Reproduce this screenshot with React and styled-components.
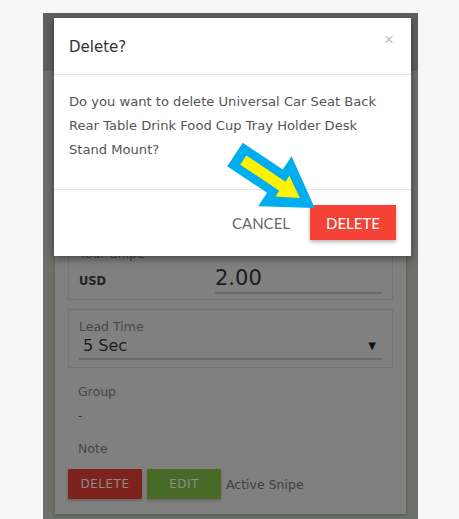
import React from 'react';
import styled, { createGlobalStyle } from 'styled-components';

const GlobalStyle = createGlobalStyle`
  html, body {
    margin: 0;
    padding: 0;
    background: #f7f7f7;
    font-family: "DejaVu Sans", sans-serif;
  }
`;

const Page = styled.div`
  position: relative;
  width: 459px;
  height: 519px;
  overflow: hidden;
  padding: 13px 0 0 43px;
  box-sizing: border-box;
`;

const Frame = styled.div`
  width: 375px;
  height: 520px;
  background: #6d6f6b;
  display: flex;
  flex-direction: column;
`;

const TopBar = styled.div`
  height: 58px;
  background: #5f605e;
  flex-shrink: 0;
`;

const Card = styled.div`
  margin: 0 12px;
  background: #808080;
  height: 443px;
  padding: 0 13px;
  box-sizing: border-box;
  box-shadow: 0 1px 3px rgba(0, 0, 0, 0.25);
  display: flex;
  flex-direction: column;
`;

const Hidden = styled.div`
  height: 166px;
  flex-shrink: 0;
`;

const Box = styled.div`
  border: 1px solid #747474;
  padding: ${p => p.$pad};
  margin-bottom: ${p => p.$gap || 0}px;
  display: flex;
  flex-direction: column;
`;

const Label = styled.div`
  font-size: 12.5px;
  color: #474747;
  line-height: 16px;
`;

const SnipeRow = styled.div`
  display: flex;
  align-items: flex-end;
  justify-content: space-between;
  margin-top: 4px;
`;

const Currency = styled.div`
  font-size: 11.5px;
  font-weight: bold;
  color: #232323;
  padding-bottom: 6px;
`;

const Amount = styled.div`
  width: 167px;
  font-size: 21px;
  color: #1c1c1c;
  border-bottom: 2px solid #6a6a6a;
  padding-bottom: 2px;
  line-height: 24px;
`;

const Select = styled.div`
  display: flex;
  justify-content: space-between;
  align-items: center;
  border-bottom: 2px solid #6a6a6a;
  font-size: 16px;
  color: #1c1c1c;
  padding: 0 6px 3px 4px;
  margin-top: 1px;
`;

const Caret = styled.span`
  font-size: 10px;
  color: #111;
`;

const Info = styled.div`
  padding: 0 10px;
  display: flex;
  flex-direction: column;
`;

const InfoLabel = styled(Label)`
  margin-top: ${p => p.$top || 0}px;
`;

const InfoValue = styled.div`
  font-size: 12.5px;
  color: #333;
  margin-top: 8px;
`;

const Actions = styled.div`
  display: flex;
  align-items: center;
  gap: 5px;
  margin-top: 12px;
`;

const DimButton = styled.div`
  width: 74px;
  height: 30px;
  display: flex;
  align-items: center;
  justify-content: center;
  background: ${p => p.$bg};
  color: #8c8c8c;
  font-size: 12px;
  letter-spacing: 0.5px;
  box-shadow: 0 2px 3px rgba(0, 0, 0, 0.2);
`;

const Status = styled.span`
  font-size: 12.5px;
  color: #3e3e3e;
`;

const Modal = styled.div`
  position: absolute;
  left: 54px;
  top: 18px;
  width: 357px;
  background: #fff;
  box-shadow: 0 3px 8px rgba(0, 0, 0, 0.45);
  display: flex;
  flex-direction: column;
`;

const ModalHeader = styled.div`
  height: 56px;
  padding: 0 15px;
  display: flex;
  justify-content: space-between;
  align-items: center;
  border-bottom: 1px solid #e5e5e5;
`;

const Title = styled.h4`
  margin: 0;
  font-weight: normal;
  font-size: 15px;
  color: #333;
  padding-top: 2px;
`;

const Close = styled.span`
  font-family: "Liberation Sans", sans-serif;
  font-size: 17px;
  color: #c2c2c2;
  margin-top: -12px;
  margin-right: 2px;
`;

const ModalBody = styled.div`
  padding: 15px 15px 27px;
  font-size: 13.1px;
  line-height: 24px;
  color: #555;
  border-bottom: 1px solid #e5e5e5;
`;

const ModalFooter = styled.div`
  display: flex;
  justify-content: flex-end;
  align-items: center;
  gap: 20px;
  padding: 15px 15px 16px;
`;

const TextButton = styled.span`
  font-family: Lato, sans-serif;
  font-size: 15px;
  color: #666;
`;

const DangerButton = styled.div`
  width: 86px;
  height: 35px;
  display: flex;
  align-items: center;
  justify-content: center;
  background: #f44336;
  color: #fff;
  font-family: Lato, sans-serif;
  font-size: 15px;
  box-shadow: 0 2px 4px rgba(0, 0, 0, 0.3);
`;

const Pointer = styled.svg`
  position: absolute;
  left: 200px;
  top: 120px;
  z-index: 2;
`;

export default function App() {
  return (
    <>
      <GlobalStyle />
      <Page>
        <Frame>
          <TopBar />
          <Card>
            <Hidden />
            <Box $pad="8px 10px 5px 10px" $gap={9}>
              <Label>Your Snipe</Label>
              <SnipeRow>
                <Currency>USD</Currency>
                <Amount>2.00</Amount>
              </SnipeRow>
            </Box>
            <Box $pad="9px 10px 7px 10px">
              <Label>Lead Time</Label>
              <Select>
                <span>5 Sec</span>
                <Caret>▼</Caret>
              </Select>
            </Box>
            <Info>
              <InfoLabel $top={16}>Group</InfoLabel>
              <InfoValue>-</InfoValue>
              <InfoLabel $top={18}>Note</InfoLabel>
            </Info>
            <Actions>
              <DimButton $bg="#7e221d">DELETE</DimButton>
              <DimButton $bg="#486a27">EDIT</DimButton>
              <Status>Active Snipe</Status>
            </Actions>
          </Card>
        </Frame>

        <Modal>
          <ModalHeader>
            <Title>Delete?</Title>
            <Close>×</Close>
          </ModalHeader>
          <ModalBody>
            Do you want to delete Universal Car Seat Back Rear Table Drink Food Cup Tray Holder Desk Stand Mount?
          </ModalBody>
          <ModalFooter>
            <TextButton>CANCEL</TextButton>
            <DangerButton>DELETE</DangerButton>
          </ModalFooter>
        </Modal>

        <Pointer width="130" height="100" viewBox="0 0 130 100">
          <g transform="translate(35 34.5) rotate(33.8)">
            <polygon points="0,-14 48,-14 48,-30 96,0 48,30 48,14 0,14" fill="#00adef" />
            <polygon points="10,-5.5 57,-5.5 57,-12.5 78,0 57,12.5 57,5.5 10,5.5" fill="#fff200" />
          </g>
        </Pointer>
      </Page>
    </>
  );
}
